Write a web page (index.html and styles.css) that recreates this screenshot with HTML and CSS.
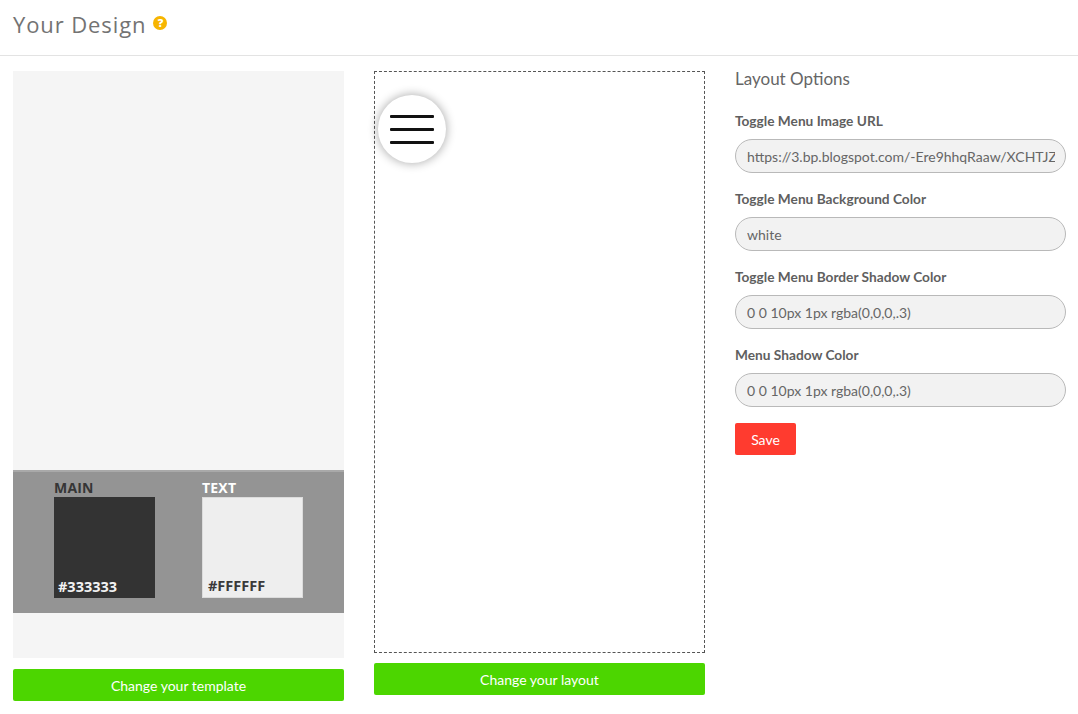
FILE: index.html
```html
<!DOCTYPE html>
<html>
<head>
<meta charset="utf-8">
<link rel="stylesheet" href="styles.css">
</head>
<body>
<header class="header">
  <h1 class="title">Your Design</h1>
  <span class="help">?</span>
</header>
<main class="cols">
  <section class="col">
    <div class="template">
      <div class="template-top"></div>
      <div class="swatches">
        <div class="swatch">
          <div class="sw-label sw-label-dark">MAIN</div>
          <div class="sw-box sw-box-dark"><span>#333333</span></div>
        </div>
        <div class="swatch">
          <div class="sw-label sw-label-light">TEXT</div>
          <div class="sw-box sw-box-light"><span>#FFFFFF</span></div>
        </div>
      </div>
      <div class="template-bottom"></div>
    </div>
    <button class="btn-green btn-template">Change your template</button>
  </section>
  <section class="col">
    <div class="layout">
      <div class="toggle">
        <span class="bar"></span>
        <span class="bar"></span>
        <span class="bar"></span>
      </div>
    </div>
    <button class="btn-green btn-layout">Change your layout</button>
  </section>
  <section class="col options">
    <h2 class="opt-title">Layout Options</h2>
    <label class="field">
      <span class="field-label">Toggle Menu Image URL</span>
      <input class="field-input" type="text" value="https://3.bp.blogspot.com/-Ere9hhqRaaw/XCHTJZcbgvI/AAAAAAAAA/menu.png">
    </label>
    <label class="field">
      <span class="field-label">Toggle Menu Background Color</span>
      <input class="field-input" type="text" value="white">
    </label>
    <label class="field">
      <span class="field-label">Toggle Menu Border Shadow Color</span>
      <input class="field-input" type="text" value="0 0 10px 1px rgba(0,0,0,.3)">
    </label>
    <label class="field">
      <span class="field-label">Menu Shadow Color</span>
      <input class="field-input" type="text" value="0 0 10px 1px rgba(0,0,0,.3)">
    </label>
    <button class="btn-save">Save</button>
  </section>
</main>
</body>
</html>
```

FILE: styles.css
```css
* { box-sizing: border-box; }
html, body { margin: 0; padding: 0; background: #fff; }
body { font-family: Lato, "Open Sans", sans-serif; }

.header {
  height: 56px;
  border-bottom: 1px solid #e3e3e3;
  display: flex;
  align-items: center;
  padding-left: 13px;
  padding-bottom: 7px;
}
.title {
  margin: 0;
  font-family: "Open Sans", sans-serif;
  font-weight: 400;
  font-size: 22px;
  color: #737373;
  letter-spacing: 0.9px;
}
.help {
  width: 14px;
  height: 14px;
  border-radius: 50%;
  background: #f7b500;
  color: #fff;
  font-family: "Open Sans", sans-serif;
  font-weight: 800;
  font-size: 11px;
  line-height: 14px;
  text-align: center;
  margin-left: 7px;
  margin-top: -2px;
}

.cols {
  display: flex;
  gap: 30px;
  padding: 15px 13px 0 13px;
}
.col { width: 331px; flex-shrink: 0; display: flex; flex-direction: column; }

.template {
  background: #f5f5f5;
  height: 587px;
  display: flex;
  flex-direction: column;
}
.template-top { height: 399px; }
.template-bottom { flex: 1; }
.swatches {
  height: 143px;
  background: #949494;
  border-top: 2px solid #a9a9a9;
  display: flex;
  gap: 47px;
  padding-left: 41px;
  padding-top: 8px;
}
.swatch { width: 101px; }
.sw-label {
  font-family: "Open Sans", sans-serif;
  font-weight: 700;
  font-size: 14px;
  line-height: 16px;
  height: 17px;
  letter-spacing: 0.2px;
}
.sw-label-dark { color: #363636; }
.sw-label-light { color: #fff; }
.sw-box {
  height: 101px;
  display: flex;
  align-items: flex-end;
  padding: 0 0 2px 4px;
  font-family: "Open Sans", sans-serif;
  font-weight: 700;
  font-size: 14.5px;
}
.sw-box-dark { background: #333; color: #f2f2f2; }
.sw-box-light { background: #eeeeee; color: #3a3a3a; border: 1px solid #dcdcdc; padding-left: 5px; }

.btn-green {
  border: none;
  background: #4cd600;
  color: #fff;
  font-family: Lato, sans-serif;
  font-size: 14px;
  height: 32px;
  border-radius: 2px;
  width: 100%;
  padding: 0;
}
.btn-template { margin-top: 11px; }
.btn-layout { margin-top: 10px; }

.layout {
  height: 582px;
  border: 1px dashed #555;
  padding: 23px 0 0 3px;
}
.toggle {
  width: 68px;
  height: 68px;
  border-radius: 50%;
  background: #fff;
  box-shadow: 0 0 10px 1px rgba(0,0,0,.3);
  display: flex;
  flex-direction: column;
  justify-content: center;
  align-items: center;
  gap: 10px;
}
.bar {
  width: 44px;
  height: 3px;
  background: #111;
  border-radius: 1px;
}

.opt-title {
  margin: 0;
  font-family: Lato, sans-serif;
  font-weight: 400;
  font-size: 17px;
  color: #666;
  line-height: 16px;
  height: 42px;
}
.field { display: flex; flex-direction: column; margin-bottom: 18px; }
.field-label {
  font-family: Lato, sans-serif;
  font-weight: 700;
  font-size: 13.7px;
  color: #5f5f5f;
  line-height: 16px;
  height: 26px;
}
.field-input {
  height: 34px;
  border-radius: 17px;
  border: 1px solid #b9b9b9;
  background: #f2f2f2;
  font-family: Lato, sans-serif;
  font-size: 14px;
  color: #666;
  padding: 0 10px 0 11px;
  width: 100%;
  outline: none;
}
.field:last-of-type { margin-bottom: 16px; }
.btn-save {
  width: 61px;
  height: 32px;
  border: none;
  border-radius: 2px;
  background: #ff3b2f;
  color: #fff;
  font-family: Lato, sans-serif;
  font-size: 14px;
  padding: 0;
}
```
